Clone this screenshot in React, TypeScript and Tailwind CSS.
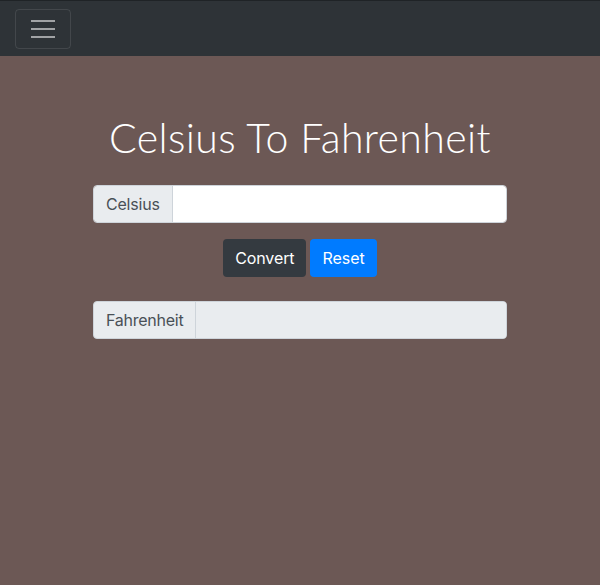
export default function App() {
  return (
    <div className="min-h-[585px] w-full bg-[#6c5855] font-['Inter',sans-serif]">
      <nav className="h-[56px] bg-[#2e3337] border-t border-[#1f2326] flex items-center px-[15px]">
        <button className="w-[56px] h-[40px] border border-white/10 rounded flex flex-col items-center justify-center gap-[6px]">
          <span className="block w-[24px] h-[2px] bg-white/55" />
          <span className="block w-[24px] h-[2px] bg-white/55" />
          <span className="block w-[24px] h-[2px] bg-white/55" />
        </button>
      </nav>
      <main className="w-[414px] mx-auto pt-[58px]">
        <h1 className="text-center text-white text-[41px] leading-[48px] font-light font-['Lato',sans-serif] tracking-[0.4px]">
          Celsius To Fahrenheit
        </h1>
        <div className="mt-[23px] flex h-[38px] rounded border border-[#ced4da] overflow-hidden">
          <span className="px-3 flex items-center bg-[#e9ecef] text-[#495057] text-base tracking-[-0.2px] border-r border-[#ced4da]">Celsius</span>
          <input className="flex-1 bg-white outline-none px-3" />
        </div>
        <div className="mt-[16px] flex justify-center gap-1">
          <button className="h-[38px] px-3 rounded bg-[#343a40] text-white text-base tracking-[-0.1px]">Convert</button>
          <button className="h-[38px] px-3 rounded bg-[#007bff] text-white text-base">Reset</button>
        </div>
        <div className="mt-[24px] flex h-[38px] rounded border border-[#ced4da] overflow-hidden bg-[#e9ecef]">
          <span className="px-3 flex items-center text-[#495057] text-base tracking-[-0.25px] border-r border-[#ced4da]">Fahrenheit</span>
          <input disabled className="flex-1 bg-[#e9ecef] outline-none px-3" />
        </div>
      </main>
    </div>
  );
}
